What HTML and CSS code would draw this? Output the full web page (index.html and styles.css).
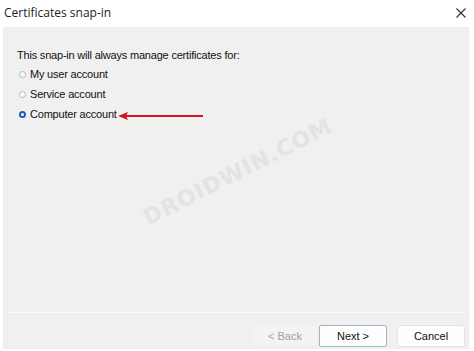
FILE: index.html
```html
<!DOCTYPE html>
<html>
<head>
<meta charset="utf-8">
<link rel="stylesheet" href="styles.css">
</head>
<body>
<div class="window">
  <div class="titlebar">
    <span class="title">Certificates snap-in</span>
    <svg class="close" width="12" height="12" viewBox="0 0 12 12"><path d="M1.5 1.5 L10.5 10.5 M10.5 1.5 L1.5 10.5" stroke="#333" stroke-width="1.1" fill="none"/></svg>
  </div>
  <div class="panel">
    <div class="content">
      <p class="intro">This snap-in will always manage certificates for:</p>
      <div class="options">
        <label class="option"><span class="radio"></span>My user account</label>
        <label class="option"><span class="radio"></span>Service account</label>
        <label class="option"><span class="radio checked"></span>Computer account
          <svg class="arrow" width="86" height="10" viewBox="0 0 86 10"><rect x="7" y="4" width="78" height="2" fill="#d3141c"/><path d="M0 5 L10 1 L8 5 L10 9 Z" fill="#d3141c"/></svg>
        </label>
      </div>
      <div class="watermark">DROIDWIN.COM</div>
    </div>
    <div class="separator"></div>
    <div class="buttons">
      <button class="btn disabled">&lt; Back</button>
      <button class="btn primary">Next &gt;</button>
      <button class="btn">Cancel</button>
    </div>
  </div>
</div>
</body>
</html>
```
FILE: styles.css
```css
* { box-sizing: border-box; }
html, body { margin: 0; padding: 0; background: #ffffff; }
body { width: 474px; height: 351px; overflow: hidden; font-family: "Liberation Sans", Arial, sans-serif; }
.window { display: flex; flex-direction: column; height: 351px; }
.titlebar { height: 27px; display: flex; align-items: center; justify-content: space-between; padding: 0 7px 0 4px; background: #fff; }
.title { font-family: "Open Sans", "Noto Sans", sans-serif; font-size: 12px; color: #222; margin-top: -2px; }
.close { margin-top: -2px; }
.panel { flex: 1; margin: 0 4px 2px 3px; background: #f0f0f0; display: flex; flex-direction: column; border-right: 1px solid #f7f7f7; }
.content { flex: 1; position: relative; padding: 22px 0 0 14px; }
.intro { margin: 0; font-size: 11px; color: #111; letter-spacing: -0.2px; }
.options { margin-top: 6px; display: flex; flex-direction: column; gap: 6px; }
.option { display: flex; align-items: center; font-size: 11px; color: #111; height: 14px; letter-spacing: -0.2px; }
.radio { width: 7px; height: 7px; border-radius: 50%; border: 1px solid #b8b8b8; background: #fafafa; margin: 0 4px 0 2px; flex-shrink: 0; }
.radio.checked { border: 2px solid #1a5fb4; background: #fff; }
.arrow { margin-left: 1px; margin-top: 4px; flex-shrink: 0; }
.watermark { position: absolute; left: 148px; top: 178px; font-family: "DejaVu Sans", sans-serif; font-weight: bold; font-size: 22px; line-height: 26px; color: #e3e3e3; letter-spacing: 1px; transform: rotate(-27deg); transform-origin: left bottom; white-space: nowrap; }
.separator { height: 1px; margin: 0 4px 0 5px; background: #d6d6d6; border-bottom: 1px solid #fafafa; }
.buttons { height: 36px; display: flex; justify-content: flex-end; align-items: flex-start; padding: 12px 4px 0 0; }
.btn { width: 68px; height: 22px; font-family: "Liberation Sans", Arial, sans-serif; font-size: 11px; color: #111; background: #fdfdfd; border: 1px solid #e4e4e4; border-radius: 2px; padding: 0; }
.btn.disabled { color: #a0a0a0; background: #f3f3f3; border-color: #eeeeee; }
.btn.primary { border: 1px solid #9bb6cf; margin-right: 10px; }
```
